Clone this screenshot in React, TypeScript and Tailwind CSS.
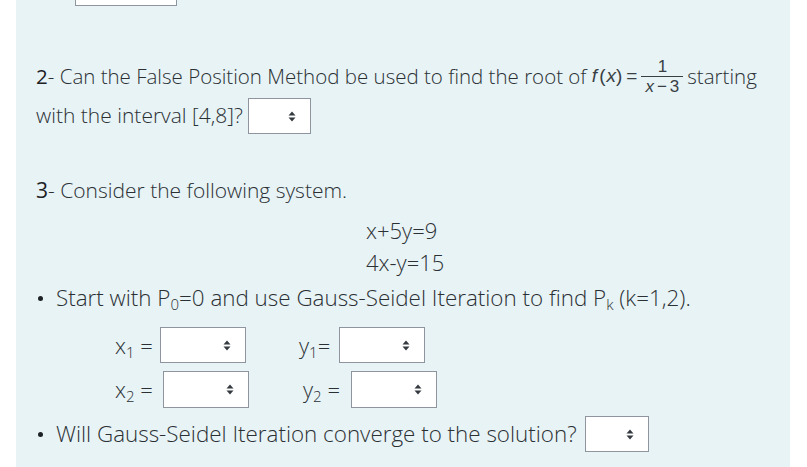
import React from 'react';

const Arrows = () => (
  <svg width="8" height="11" viewBox="0 0 8 11" className="shrink-0">
    <path d="M4 0.5 L7.5 4.5 L0.5 4.5 Z" fill="#343a40" />
    <path d="M4 10.5 L7.5 6.5 L0.5 6.5 Z" fill="#343a40" />
  </svg>
);

const Select = ({ w, h = 36, className = '' }: { w: number; h?: number; className?: string }) => (
  <div
    className={`bg-white border border-[#8f959e] flex items-center justify-end pr-[14px] shrink-0 ${className}`}
    style={{ width: w, height: h }}
  >
    <Arrows />
  </div>
);

const Sub = ({ children }: { children: React.ReactNode }) => (
  <sub className="text-[15px] relative top-[4px] align-baseline">{children}</sub>
);

const Bullet = () => (
  <span className="w-[20px] shrink-0 flex items-center">
    <span className="ml-[2px] w-[5px] h-[5px] rounded-full bg-[#1d2125]" />
  </span>
);

export default function App() {
  return (
    <div className="w-[807px] h-[467px] bg-white overflow-hidden">
      <div
        className="ml-[16px] w-[774px] h-full bg-[#e7f3f5] text-[#2b3034] text-[20.5px] font-light pl-[20px]"
        style={{ fontFamily: '"Open Sans", "Noto Sans", sans-serif' }}
      >
        {/* leftover answer box from previous question */}
        <div className="ml-[39px] w-[102px] h-[6px] bg-white border border-t-0 border-[#8f959e]" />

        {/* question 2 */}
        <div className="mt-[50px] h-[40px] flex items-center whitespace-nowrap">
          <span className="text-[#1d2125] font-normal">2</span>
          <span>- Can the False Position Method be used to find the root of&nbsp;</span>
          <span
            className="flex items-center text-[19px] text-[#3a3f44] font-normal"
            style={{ fontFamily: '"Liberation Sans", Arial, sans-serif' }}
          >
            <span className="italic mr-[2px]">f</span>
            <span>(</span>
            <span className="italic ml-[1px]">x</span>
            <span>)</span>
            <span className="ml-[4px] mr-[4px]">=</span>
            <span className="inline-flex flex-col items-center text-[17px] leading-[18px] mt-[2px]">
              <span className="px-[1px]">1</span>
              <span className="border-t border-[#3a3f44] px-[4px] pt-[1px]">
                <span className="italic">x</span>
                <span className="mx-[3px]">−</span>3
              </span>
            </span>
          </span>
          <span className="ml-[4px]">starting</span>
        </div>
        <div className="h-[40px] flex items-center text-[21px]">
          <span>with the interval [4,8]?</span>
          <Select w={63} className="ml-[5px]" />
        </div>

        {/* question 3 */}
        <div className="mt-[35px] h-[40px] flex items-center text-[21px]">
          <span className="text-[#1d2125] font-normal">3</span>
          <span>- Consider the following system.</span>
        </div>
        <div className="mt-[3px] h-[32px] flex items-center pl-[330px] text-[22px]">x+5y=9</div>
        <div className="h-[32px] flex items-center pl-[330px] text-[22px]">4x-y=15</div>

        <div className="h-[40px] flex items-center text-[22.4px] whitespace-nowrap">
          <Bullet />
          <span>
            Start with P<Sub>0</Sub>=0 and use Gauss-Seidel Iteration to find P<Sub>k</Sub> (k=1,2).
          </span>
        </div>

        <div className="mt-[7px] h-[40px] flex items-center pl-[79px] text-[22px]">
          <span className="w-[45px]">
            x<Sub>1</Sub> =
          </span>
          <Select w={86} h={36} />
          <span className="ml-[53px] w-[40px]">
            y<Sub>1</Sub>=
          </span>
          <Select w={86} h={36} />
        </div>
        <div className="mt-[4px] h-[40px] flex items-center pl-[79px] text-[22px]">
          <span className="w-[48px]">
            x<Sub>2</Sub> =
          </span>
          <Select w={86} h={37} />
          <span className="ml-[54px] w-[48px]">
            y<Sub>2</Sub> =
          </span>
          <Select w={86} h={37} />
        </div>

        <div className="mt-[5px] h-[40px] flex items-center text-[22.4px] whitespace-nowrap">
          <Bullet />
          <span>Will Gauss-Seidel Iteration converge to the solution?</span>
          <Select w={64} className="ml-[8px]" />
        </div>
      </div>
    </div>
  );
}
